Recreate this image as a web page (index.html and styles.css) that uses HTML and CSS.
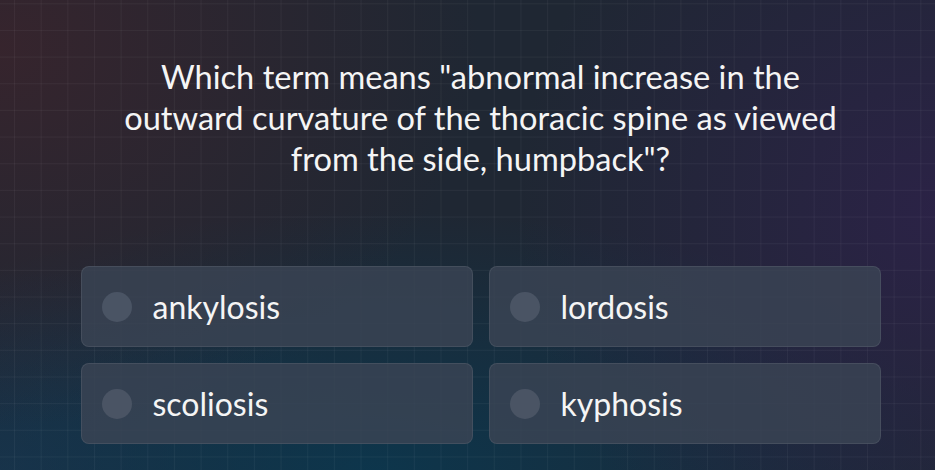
FILE: index.html
```html
<!DOCTYPE html>
<html lang="en">
<head>
<meta charset="utf-8">
<title>Quiz</title>
<link rel="stylesheet" href="styles.css">
</head>
<body>
<main class="stage">
  <h1 class="question">Which term means "abnormal increase in the outward curvature of the thoracic spine as viewed from the side, humpback"?</h1>
  <div class="options">
    <button class="option"><span class="dot"></span><span class="label">ankylosis</span></button>
    <button class="option"><span class="dot"></span><span class="label">lordosis</span></button>
    <button class="option"><span class="dot"></span><span class="label">scoliosis</span></button>
    <button class="option"><span class="dot"></span><span class="label">kyphosis</span></button>
  </div>
</main>
</body>
</html>
```
FILE: styles.css
```css
html, body {
  margin: 0;
  padding: 0;
  width: 935px;
  height: 470px;
  overflow: hidden;
}
body {
  font-family: Lato, "Open Sans", sans-serif;
  color: #f3f4f6;
  background-color: #1f2733;
  background-image:
    linear-gradient(rgba(255,255,255,0.045) 1px, transparent 1px),
    linear-gradient(90deg, rgba(255,255,255,0.045) 1px, transparent 1px),
    radial-gradient(ellipse 480px 380px at 0% 10%, rgba(58,36,44,0.85), rgba(58,36,44,0) 100%),
    radial-gradient(ellipse 420px 420px at 100% 45%, rgba(44,34,72,0.9), rgba(44,34,72,0) 100%),
    radial-gradient(ellipse 620px 260px at 40% 100%, rgba(10,56,80,0.85), rgba(10,56,80,0) 100%),
    radial-gradient(ellipse 400px 200px at 0% 100%, rgba(30,55,85,0.6), rgba(30,55,85,0) 100%);
  background-size: 26.667px 26.667px, 26.667px 26.667px, auto, auto, auto, auto;
  background-position: 0 3.3px, 14px 0, 0 0, 0 0, 0 0, 0 0;
}
.stage {
  display: flex;
  flex-direction: column;
  align-items: center;
  padding: 56px 55px 0 81px;
  box-sizing: border-box;
  height: 470px;
}
.question {
  margin: 0;
  width: 740px;
  font-size: 32.6px;
  font-weight: 400;
  line-height: 41px;
  text-align: center;
  color: #f5f5f5;
}
.options {
  margin-top: 87px;
  display: grid;
  grid-template-columns: 392px 392px;
  gap: 16px;
  width: 800px;
}
.option {
  display: flex;
  align-items: center;
  gap: 21px;
  height: 81px;
  padding: 0 20px;
  box-sizing: border-box;
  background: rgba(58, 68, 84, 0.82);
  border: 1px solid rgba(255,255,255,0.08);
  border-radius: 8px;
  font-family: inherit;
  color: #f5f5f5;
  font-size: 32px;
  text-align: left;
  cursor: pointer;
}
.dot {
  width: 30px;
  height: 30px;
  border-radius: 50%;
  background: #4a5464;
  flex: none;
}
.label {
  line-height: 1;
}
```
